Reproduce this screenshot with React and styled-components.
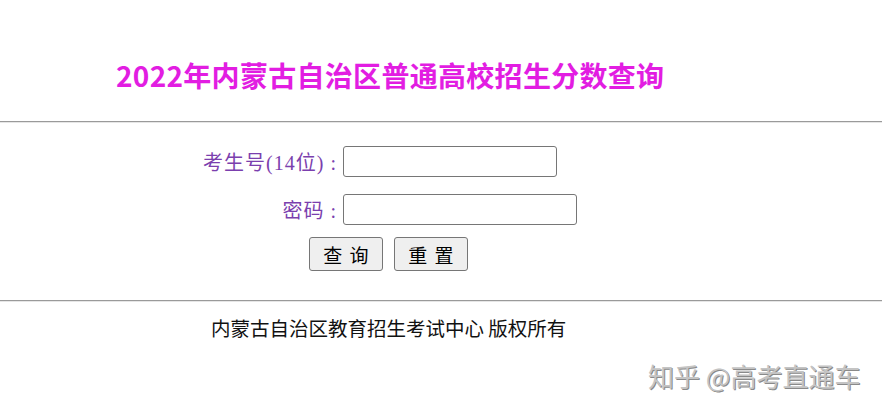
import styled, { createGlobalStyle } from "styled-components"

const GlobalStyle = createGlobalStyle`
  html, body {
    margin: 0;
    padding: 0;
    background: #ffffff;
  }
  body {
    font-family: "Liberation Serif", "Noto Sans CJK SC", serif;
  }
`

const Page = styled.div`
  position: relative;
  width: 882px;
  height: 410px;
  overflow: hidden;
`

const Header = styled.header`
  height: 121px;
  padding-left: 116px;
  box-sizing: border-box;
  display: flex;
  align-items: center;
  padding-top: 28px;
`

const Title = styled.h1`
  margin: 0;
  font-family: "Noto Sans CJK SC", "Liberation Sans", sans-serif;
  font-size: 28px;
  font-weight: 700;
  color: #e21de2;
  letter-spacing: 0.3px;
`

const Rule = styled.hr`
  margin: 0;
  border: none;
  border-top: 1px solid #9a9a9a;
  border-bottom: 1px solid #e6e6e6;
`

const Form = styled.form`
  display: grid;
  grid-template-columns: 337px auto;
  column-gap: 6px;
  row-gap: 17px;
  align-items: center;
  padding: 23px 0 29px;
`

const Label = styled.label`
  justify-self: end;
  font-family: "Liberation Serif", "Noto Sans CJK SC", serif;
  font-size: 20px;
  letter-spacing: 1px;
  color: #7b3fae;
  white-space: pre;
`

const Input = styled.input`
  display: block;
  width: ${p => p.$w}px;
  height: 31px;
  box-sizing: border-box;
  border: 1px solid #767676;
  border-radius: 3px;
  padding: 0 4px;
  font-size: 16px;
  outline: none;
`

const Buttons = styled.div`
  grid-column: 1 / span 2;
  display: flex;
  gap: 11px;
  padding-left: 309px;
  margin-top: -5px;
`

const Button = styled.button`
  width: 74px;
  height: 34px;
  background: #efefef;
  border: 1px solid #767676;
  border-radius: 3px;
  font-family: "Noto Sans CJK SC", sans-serif;
  font-size: 19px;
  color: #000;
  padding: 0;
  word-spacing: 3px;
`

const Footer = styled.footer`
  padding: 11px 0 0 211px;
  font-family: "Noto Sans CJK SC", sans-serif;
  font-size: 19.5px;
  color: #111;
`

const Watermark = styled.div`
  position: absolute;
  left: 648px;
  top: 357px;
  font-family: "Noto Sans CJK SC", sans-serif;
  font-size: 26px;
  color: #c4c4c4;
  text-shadow: 1px 1px 0 #8a8a8a;
`

export default function App() {
  return (
    <Page>
      <GlobalStyle />
      <Header>
        <Title>2022年内蒙古自治区普通高校招生分数查询</Title>
      </Header>
      <Rule />
      <Form onSubmit={e => e.preventDefault()}>
        <Label htmlFor="ksh">考生号(14位) :</Label>
        <Input id="ksh" $w={214} />
        <Label htmlFor="pwd">密码 :</Label>
        <Input id="pwd" type="password" $w={234} />
        <Buttons>
          <Button type="submit">查 询</Button>
          <Button type="reset">重 置</Button>
        </Buttons>
      </Form>
      <Rule />
      <Footer>内蒙古自治区教育招生考试中心 版权所有</Footer>
      <Watermark>知乎 @高考直通车</Watermark>
    </Page>
  )
}
